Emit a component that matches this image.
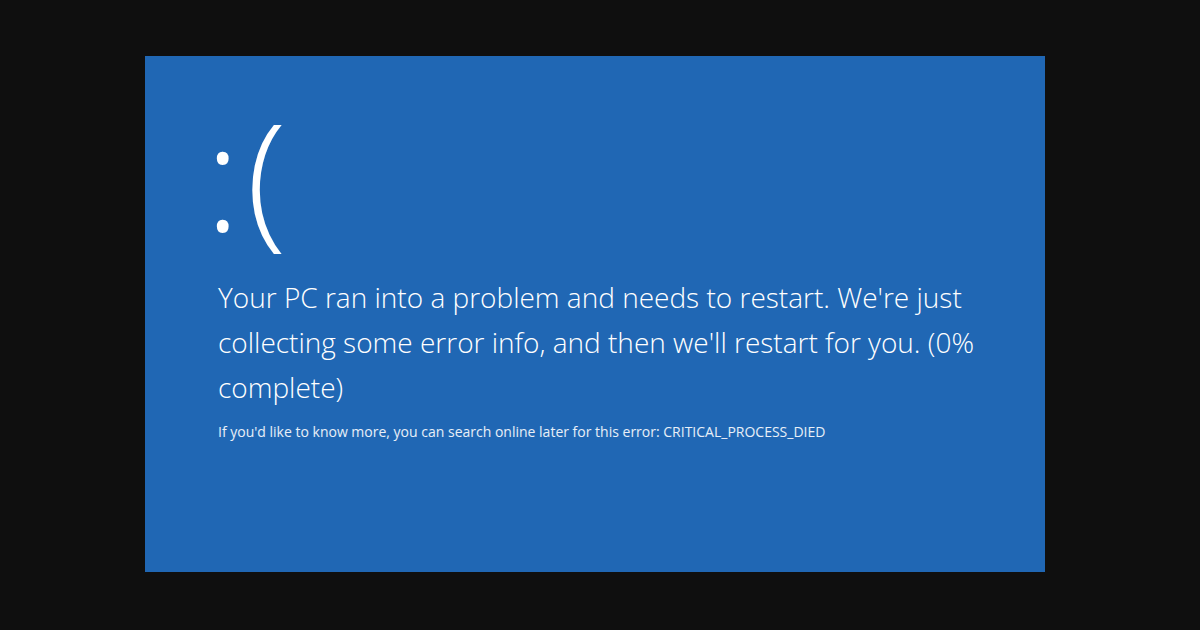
const App = () => {
  return (
    <div className="w-[1200px] h-[630px] bg-[#0f0f0f] pl-[145px] pt-[56px]">
      <div className="w-[900px] h-[516px] bg-[#2067b4] pl-[73px] pt-[43px] text-white font-['Open_Sans',sans-serif]">
        <div className="-ml-[13px] text-[148px] leading-[150px] font-light h-[150px] tracking-[6px]">:(</div>
        <p className="mt-[26px] text-[28px] leading-[45px] font-light w-[790px]">
          Your PC ran into a problem and needs to restart. We're just collecting some error info, and then we'll restart for you. (0% complete)
        </p>
        <p className="mt-[11px] text-[14px] text-white/90">
          If you'd like to know more, you can search online later for this error: CRITICAL_PROCESS_DIED
        </p>
      </div>
    </div>
  );
};

export default App;
